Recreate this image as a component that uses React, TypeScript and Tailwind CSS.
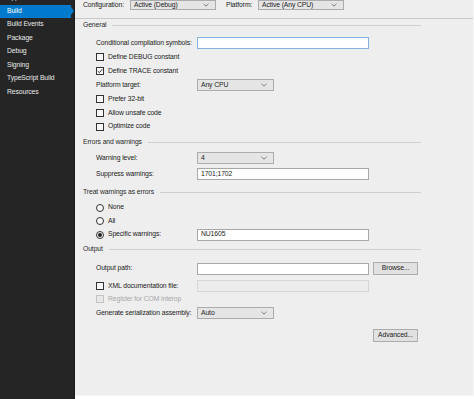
import React from "react";

const font = { fontFamily: '"Liberation Sans", Arial, sans-serif' };

function Chevron() {
  return (
    <svg width="6" height="4" viewBox="0 0 6 4" className="absolute right-[6px] top-1/2 -translate-y-1/2">
      <polyline points="0.5,0.8 3,3.2 5.5,0.8" fill="none" stroke="#606060" strokeWidth="0.8" />
    </svg>
  );
}

function Select({ value, w = "w-[77px]", h = "h-[12px]" }: { value: string; w?: string; h?: string }) {
  return (
    <div className={`relative shrink-0 ${w} ${h} bg-[#e5e5e5] border border-[#acacac] flex items-center pl-[3px] text-[#1b1b1b]`}>
      <span className="leading-none whitespace-nowrap">{value}</span>
      <Chevron />
    </div>
  );
}

function Input({ value = "", blue = false, disabled = false }: { value?: string; blue?: boolean; disabled?: boolean }) {
  return (
    <div
      className={`shrink-0 w-[172px] h-[12px] border flex items-center pl-[3px] leading-none ${
        disabled ? "bg-[#ececec] border-[#d6d6d6]" : blue ? "bg-white border-[#86b3e0]" : "bg-white border-[#a8a8a8]"
      }`}
    >
      {value}
    </div>
  );
}

function Check({ checked = false, disabled = false }: { checked?: boolean; disabled?: boolean }) {
  return (
    <div
      className={`shrink-0 w-[8px] h-[8px] border flex items-center justify-center ${
        disabled ? "border-[#c4c4c4] bg-[#e8e8e8]" : "border-[#333333] bg-[#f7f7f7]"
      }`}
    >
      {checked && (
        <svg width="6" height="6" viewBox="0 0 6 6">
          <polyline points="0.7,3 2.4,4.7 5.3,1.2" fill="none" stroke="#222" strokeWidth="0.9" />
        </svg>
      )}
    </div>
  );
}

function Radio({ checked = false }: { checked?: boolean }) {
  return (
    <div className="shrink-0 w-[8px] h-[8px] rounded-full border border-[#333333] bg-[#f7f7f7] flex items-center justify-center">
      {checked && <div className="w-[4px] h-[4px] rounded-full bg-[#222]" />}
    </div>
  );
}

function Heading({ text, className = "" }: { text: string; className?: string }) {
  return (
    <div className={`h-[12px] flex items-center pl-[8px] ${className}`}>
      <span className="leading-none whitespace-nowrap text-[#2a2a2a]">{text}</span>
      <div className="flex-1 ml-[6px] h-px bg-[#cfcfcf]" />
    </div>
  );
}

function LabelRow({ label, children, className = "" }: { label: string; children?: React.ReactNode; className?: string }) {
  return (
    <div className={`h-[14px] flex items-center pl-[21px] ${className}`}>
      <div className="w-[101px] shrink-0">
        <span className="leading-none whitespace-nowrap">{label}</span>
      </div>
      {children}
    </div>
  );
}

function CheckRow({
  label,
  checked,
  disabled,
  className = "",
  children,
  h = "h-[14px]",
}: {
  label: string;
  checked?: boolean;
  disabled?: boolean;
  className?: string;
  children?: React.ReactNode;
  h?: string;
}) {
  return (
    <div className={`${h} flex items-center pl-[21px] ${className}`}>
      <div className="w-[101px] shrink-0 flex items-center gap-[4px]">
        <Check checked={checked} disabled={disabled} />
        <span className={`leading-none whitespace-nowrap ${disabled ? "text-[#a8a8a8]" : ""}`}>{label}</span>
      </div>
      {children}
    </div>
  );
}

function RadioRow({ label, checked, children, className = "" }: { label: string; checked?: boolean; children?: React.ReactNode; className?: string }) {
  return (
    <div className={`h-[13.5px] flex items-center pl-[21px] ${className}`}>
      <div className="w-[101px] shrink-0 flex items-center gap-[4px]">
        <Radio checked={checked} />
        <span className="leading-none whitespace-nowrap">{label}</span>
      </div>
      {children}
    </div>
  );
}

function Button({ text }: { text: string }) {
  return (
    <div className="w-[45px] h-[13px] bg-[#e1e1e1] border border-[#adadad] flex items-center justify-center leading-none whitespace-nowrap">
      {text}
    </div>
  );
}

export default function App() {
  const items = ["Application", "Build", "Build Events", "Package", "Debug", "Signing", "TypeScript Build", "Resources"];
  return (
    <div className="w-[474px] h-[399px] flex overflow-hidden text-[6.8px] tracking-[-0.1px] text-[#1b1b1b]" style={font}>
      <div className="w-[75px] h-full bg-[#252526] flex flex-col shrink-0 border-r border-[#1a1a1a]">
        <div className="mt-[-9px] flex flex-col">
          {items.map((it) => {
            const sel = it === "Build";
            return (
              <div key={it} className={`relative h-[13.5px] flex items-center pl-[7px] ${sel ? "bg-[#007acc] mr-[3px] text-white" : "text-[#e8e8e8]"}`}>
                <span className="leading-none whitespace-nowrap">{it}</span>
                {sel && (
                  <div className="absolute right-[-3px] top-1/2 -translate-y-1/2 w-0 h-0 border-y-[4px] border-y-transparent border-l-[3px] border-l-[#007acc]" />
                )}
              </div>
            );
          })}
        </div>
      </div>
      <div className="flex-1 h-[396px] bg-[#eeeeee] flex flex-col border-r border-b border-r-[#f7f7f7] border-b-[#f7f7f7]">
        <div className="h-[19px] border-b border-[#c9c9c9] pl-[8px] flex items-start pt-0">
          <div className="h-[10px] flex items-center">
            <span className="w-[47px] leading-none whitespace-nowrap">Configuration:</span>
            <Select value="Active (Debug)" w="w-[86px]" h="h-[10px]" />
            <span className="ml-[10px] w-[32px] leading-none whitespace-nowrap">Platform:</span>
            <Select value="Active (Any CPU)" w="w-[86px]" h="h-[10px]" />
          </div>
        </div>
        <div className="flex flex-col pr-[52px]">
          <Heading text="General" />
          <LabelRow label="Conditional compilation symbols:" className="mt-[5px]">
            <Input blue />
          </LabelRow>
          <CheckRow label="Define DEBUG constant" />
          <CheckRow label="Define TRACE constant" checked />
          <LabelRow label="Platform target:">
            <Select value="Any CPU" />
          </LabelRow>
          <CheckRow label="Prefer 32-bit" />
          <CheckRow label="Allow unsafe code" />
          <CheckRow label="Optimize code" h="h-[13px]" />

          <Heading text="Errors and warnings" className="mt-[3px]" />
          <LabelRow label="Warning level:" className="mt-[3px]">
            <Select value="4" />
          </LabelRow>
          <LabelRow label="Suppress warnings:" className="mt-[2px]">
            <Input value="1701;1702" />
          </LabelRow>

          <Heading text="Treat warnings as errors" className="mt-[5px]" />
          <RadioRow label="None" className="mt-[3px]" />
          <RadioRow label="All" />
          <RadioRow label="Specific warnings:" checked>
            <Input value="NU1605" />
          </RadioRow>

          <Heading text="Output" className="mt-[2px]" />
          <LabelRow label="Output path:" className="mt-[6px]">
            <Input />
            <div className="ml-[4px]">
              <Button text="Browse..." />
            </div>
          </LabelRow>
          <CheckRow label="XML documentation file:" className="mt-[3.5px]">
            <Input disabled />
          </CheckRow>
          <CheckRow label="Register for COM interop" disabled className="mt-[-1px]" />
          <LabelRow label="Generate serialization assembly:">
            <Select value="Auto" />
          </LabelRow>
          <div className="mt-[8px] h-[14px] flex items-center pl-[298px]">
            <Button text="Advanced..." />
          </div>
        </div>
      </div>
    </div>
  );
}
